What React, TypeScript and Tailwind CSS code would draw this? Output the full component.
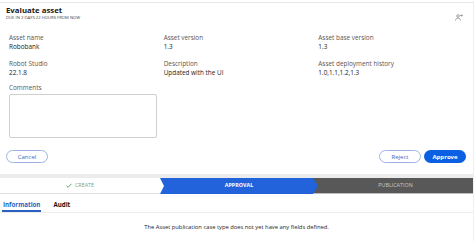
import type { ReactNode } from 'react'

const fields: { label: string; value: string }[] = [
  { label: 'Asset name', value: 'Robobank' },
  { label: 'Asset version', value: '1.3' },
  { label: 'Asset base version', value: '1.3' },
  { label: 'Robot Studio', value: '22.1.8' },
  { label: 'Description', value: 'Updated with the UI' },
  { label: 'Asset deployment history', value: '1.0,1.1,1.2,1.3' },
]

function Pill({ children, primary }: { children: ReactNode; primary?: boolean }) {
  return (
    <button
      className={`flex h-[13px] w-[42px] items-center justify-center rounded-full text-[6px] leading-none ${
        primary
          ? 'bg-[#0b5fe3] font-bold text-white'
          : 'border border-[#9fb4e4] bg-white text-[#3d67c6]'
      }`}
    >
      {children}
    </button>
  )
}

function TransferIcon() {
  return (
    <svg width="8" height="7" viewBox="0 0 16 14" fill="none" stroke="#8a8a8a" strokeWidth="1.6" aria-hidden="true">
      <circle cx="6" cy="4" r="2.6" />
      <path d="M1 13c0-3 2.2-5 5-5s5 2 5 5" />
      <path d="M10 3h5M13 1l2 2-2 2" />
    </svg>
  )
}

export default function App() {
  return (
    <div
      className="h-[244px] w-[474px] overflow-hidden bg-white text-[#222]"
      style={{ fontFamily: '"Open Sans", "Liberation Sans", sans-serif' }}
    >
      <div className="mt-[2px] h-px bg-[#e6e6e6]" />

      <div className="border-r border-[#f0f0f0]">
        {/* header */}
        <div className="flex justify-between pl-[6px] pr-[10px] pt-[3px]">
          <div>
            <div className="text-[7.8px] font-bold leading-[8px] text-[#1a1a1a]">Evaluate asset</div>
            <div className="mt-[1px] text-[4.2px] uppercase leading-[5px] text-[#444]">
              Due in 2 days 22 hours from now
            </div>
          </div>
          <div className="pt-[8px]">
            <TransferIcon />
          </div>
        </div>

        {/* fields */}
        <div className="mt-[13px] grid grid-cols-3 gap-y-[9px] pl-[9px]">
          {fields.map((f) => (
            <div key={f.label} className="flex flex-col gap-[1px]">
              <span className="text-[6.4px] leading-[8px] text-[#555]">{f.label}</span>
              <span className="text-[6.4px] leading-[8px] text-[#222]">{f.value}</span>
            </div>
          ))}
        </div>

        {/* comments */}
        <div className="mt-[7px] pl-[9px]">
          <div className="text-[6.4px] leading-[8px] text-[#555]">Comments</div>
          <div className="mt-[2px] h-[44px] w-[148px] rounded-[2px] border border-[#cfcfcf]" />
        </div>

        {/* actions */}
        <div className="mt-[12px] flex items-center justify-between pl-[6px] pr-[7px]">
          <Pill>Cancel</Pill>
          <div className="flex gap-[3px]">
            <Pill>Reject</Pill>
            <Pill primary>Approve</Pill>
          </div>
        </div>

        {/* stages */}
        <div className="mt-[11px] h-[4px] bg-[#ececec]" />
        <div className="flex h-[16px] text-[5.4px] uppercase leading-none">
          <div className="flex w-[160px] items-center justify-center gap-[3px] border-b border-[#e2e2e2] bg-white text-[#6e9f98]">
            <svg width="6" height="5" viewBox="0 0 12 10" fill="none" stroke="#4f9a6e" strokeWidth="1.8" aria-hidden="true">
              <path d="M1 5.5l3.2 3L11 1.5" />
            </svg>
            <span>Create</span>
          </div>
          <div className="z-10 flex w-[158px] items-center justify-center bg-[#2262da] font-bold text-white [clip-path:polygon(0_0,calc(100%-5px)_0,100%_50%,calc(100%-5px)_100%,0_100%,4px_50%)]">
            Approval
          </div>
          <div className="-ml-[6px] flex flex-1 items-center justify-center border-b border-[#bdbdbd] bg-[#585858] pl-[6px] text-[#c8c8c8]">
            Publication
          </div>
        </div>

        {/* tabs */}
        <div className="mt-[7px] flex items-end gap-[12px] border-b border-[#ececec] pl-[2px]">
          <div className="border-b-2 border-[#2b5fc0] px-[1px] pb-[1px] text-[6.2px] font-bold leading-[8px] text-[#2b5fc0]">
            Information
          </div>
          <div className="pb-[3px] text-[6.2px] font-bold leading-[8px] text-[#111]">Audit</div>
        </div>

        <div className="flex h-[28px] items-center justify-center text-[5.8px] text-[#222]">
          The Asset publication case type does not yet have any fields defined.
        </div>
      </div>
    </div>
  )
}
